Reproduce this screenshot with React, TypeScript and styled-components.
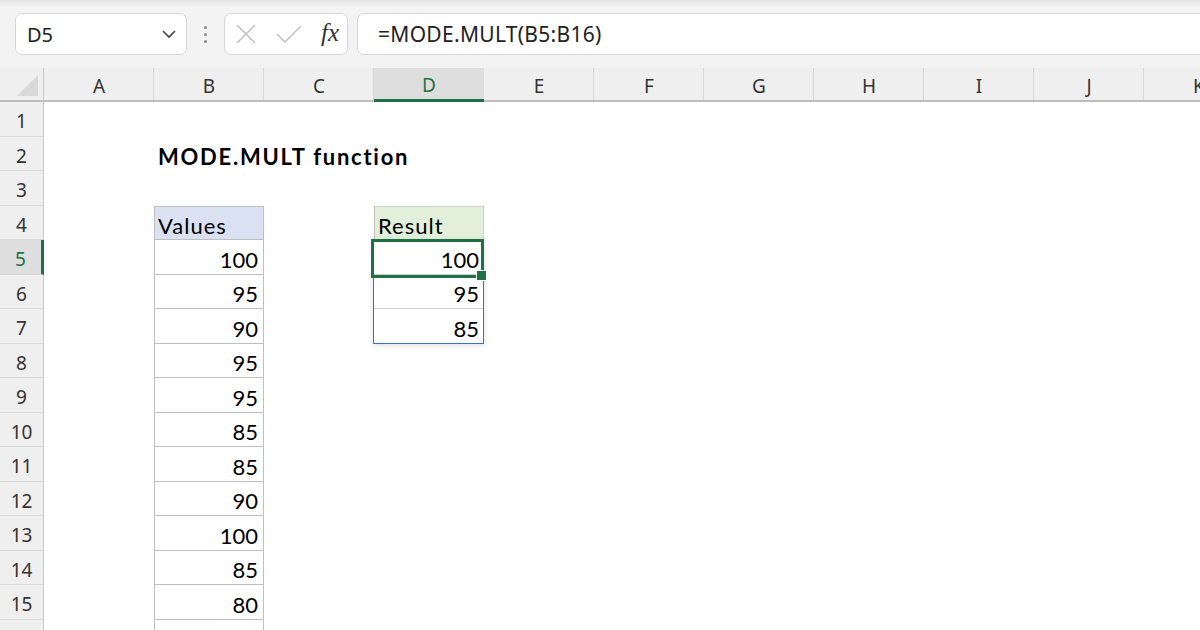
import React from 'react';
import styled, { createGlobalStyle } from 'styled-components';

const COLUMNS = ['A', 'B', 'C', 'D', 'E', 'F', 'G', 'H', 'I', 'J', 'K'];
const ROW_COUNT = 16;
// row 16 lies under the bottom edge, only its top border shows
const VALUES: (number | null)[] = [100, 95, 90, 95, 95, 85, 85, 90, 100, 85, 80, null];
const RESULTS = [100, 95, 85];
const ACTIVE_COL = 'D';
const ACTIVE_ROW = 5;
const LAST_VISIBLE_ROW = 15;

const GREEN = '#1e7145';

const GlobalStyle = createGlobalStyle`
  html, body {
    margin: 0;
    padding: 0;
    background: #ffffff;
    overflow: hidden;
  }
  * {
    box-sizing: border-box;
  }
`;

// grid line numbers: column A is grid column 2, sheet row 1 is grid row 2
const gridCol = (col: string) => COLUMNS.indexOf(col) + 2;
const gridRow = (row: number) => row + 1;

function renderCell(col: string, row: number) {
  const key = `${col}${row}`;
  const at = { $col: gridCol(col), $row: gridRow(row) };

  if (col === 'B' && row === 2) {
    return (
      <Title key={key} {...at}>
        MODE.MULT function
      </Title>
    );
  }
  if (col === 'B' && row === 4) {
    return (
      <HeadCell key={key} {...at} $fill="#d9e1f2" $line="#bfbfbf">
        Values
      </HeadCell>
    );
  }
  if (col === 'B' && row > 4) {
    return (
      <ValueCell key={key} {...at}>
        {VALUES[row - 5]}
      </ValueCell>
    );
  }
  if (col === 'D' && row === 4) {
    return (
      <HeadCell key={key} {...at} $fill="#e2efda" $line="#c9d3c4">
        Result
      </HeadCell>
    );
  }
  if (col === 'D' && row > 4 && row <= 4 + RESULTS.length) {
    return (
      <ResultCell key={key} {...at} $last={row === 4 + RESULTS.length}>
        {RESULTS[row - 5]}
      </ResultCell>
    );
  }
  return <Cell key={key} {...at} />;
}

function App() {
  const rows = Array.from({ length: ROW_COUNT }, (_, i) => i + 1);

  return (
    <Layout>
      <GlobalStyle />
      {/* Formula bar */}
      <Toolbar>
        <NameBox>
          <span>D5</span>
          <svg width="16" height="10" viewBox="0 0 16 10">
            <polyline points="2,2 8,8 14,2" fill="none" stroke="#444" strokeWidth="1.6" />
          </svg>
        </NameBox>
        <Grip>
          <Dot />
          <Dot />
          <Dot />
        </Grip>
        <FuncBox>
          <svg width="22" height="22" viewBox="0 0 22 22">
            <line x1="2" y1="2" x2="20" y2="20" stroke="#bdbdbd" strokeWidth="1.4" />
            <line x1="20" y1="2" x2="2" y2="20" stroke="#bdbdbd" strokeWidth="1.4" />
          </svg>
          <svg width="28" height="22" viewBox="0 0 28 22">
            <polyline points="2,11 10,19 26,3" fill="none" stroke="#bdbdbd" strokeWidth="1.4" />
          </svg>
          <Fx>fx</Fx>
        </FuncBox>
        <FormulaBox>=MODE.MULT(B5:B16)</FormulaBox>
      </Toolbar>

      {/* Sheet */}
      <Sheet>
        <Corner $col={1} $row={1}>
          <svg width="21" height="21" viewBox="0 0 21 21">
            <polygon points="21,0 21,21 0,21" fill="#d9d9d9" />
          </svg>
        </Corner>
        {COLUMNS.map((col) => (
          <ColHeader key={col} $col={gridCol(col)} $row={1} $active={col === ACTIVE_COL}>
            {col}
          </ColHeader>
        ))}
        {rows.map((row) => (
          <React.Fragment key={row}>
            <RowHeader $col={1} $row={gridRow(row)} $active={row === ACTIVE_ROW}>
              {row <= LAST_VISIBLE_ROW ? row : null}
            </RowHeader>
            {COLUMNS.map((col) => renderCell(col, row))}
          </React.Fragment>
        ))}
        <SpillOutline />
        <ActiveOutline />
      </Sheet>
    </Layout>
  );
}

type Slot = { $col: number; $row: number };

const Layout = styled.div`
  display: flex;
  flex-direction: column;
  width: 1200px;
  height: 630px;
  overflow: hidden;
  background: #ffffff;
`;

/* Formula bar */

const Toolbar = styled.div`
  display: flex;
  align-items: flex-start;
  flex-shrink: 0;
  height: 68px;
  padding: 13px 0 0 15px;
  background: linear-gradient(#e4e4e4 0, #f3f3f3 7px, #f3f3f3 100%);
  font-family: 'Noto Sans', 'Open Sans', sans-serif;
`;

const BarBox = styled.div`
  display: flex;
  align-items: center;
  height: 42px;
  background: #ffffff;
  border: 1px solid #d6d6d6;
  border-radius: 7px;
`;

const NameBox = styled(BarBox)`
  justify-content: space-between;
  width: 172px;
  padding: 0 9px 0 11px;
  color: #222;
  font-size: 20px;
`;

const Grip = styled.div`
  display: flex;
  flex-direction: column;
  align-items: center;
  justify-content: center;
  gap: 4px;
  width: 37px;
  height: 42px;
`;

const Dot = styled.span`
  width: 3px;
  height: 3px;
  background: #8a8a8a;
  border-radius: 50%;
`;

const FuncBox = styled(BarBox)`
  justify-content: space-between;
  width: 124px;
  padding: 0 8px 0 10px;
`;

const Fx = styled.span`
  color: #333;
  font-family: 'Liberation Serif', 'DejaVu Serif', serif;
  font-size: 25px;
  font-style: italic;
  line-height: 1;
  padding-bottom: 3px;
`;

const FormulaBox = styled(BarBox)`
  flex: 1;
  margin: 0 -20px 0 9px;
  padding-left: 20px;
  color: #222;
  font-size: 21px;
  letter-spacing: 0.3px;
`;

/* Sheet */

const Sheet = styled.div`
  display: grid;
  grid-template-columns: 44px repeat(11, 110px);
  grid-template-rows: 34px repeat(16, 34.5px);
  background: #ffffff;
`;

const HeaderBase = styled.div<Slot>`
  grid-column: ${({ $col }) => $col};
  grid-row: ${({ $row }) => $row};
  display: flex;
  align-items: center;
  justify-content: center;
  font-family: 'Noto Sans', 'Open Sans', sans-serif;
  font-size: 19px;
  color: #333;
  background-color: #efefef;
`;

const Corner = styled(HeaderBase)`
  align-items: flex-end;
  justify-content: flex-end;
  padding: 0 5px 4px 0;
  border-right: 1px solid #c8c8c8;
  border-bottom: 2px solid #bdbdbd;
`;

const ColHeader = styled(HeaderBase)<{ $active?: boolean }>`
  padding-top: 3px;
  color: ${({ $active }) => ($active ? GREEN : '#333')};
  background: ${({ $active }) =>
    $active
      ? '#dedede'
      : 'linear-gradient(#d6d6d6, #d6d6d6) right top / 1px 100% no-repeat, #efefef'};
  border-bottom: ${({ $active }) => ($active ? `3px solid ${GREEN}` : '2px solid #bdbdbd')};
`;

const RowHeader = styled(HeaderBase)<{ $active?: boolean }>`
  padding-top: 5px;
  color: ${({ $active }) => ($active ? GREEN : '#333')};
  background-color: ${({ $active }) => ($active ? '#dedede' : '#efefef')};
  border-right: ${({ $active }) => ($active ? `3px solid ${GREEN}` : '1px solid #c8c8c8')};
  border-bottom: 1px solid #dadada;
`;

const Cell = styled.div<Slot>`
  grid-column: ${({ $col }) => $col};
  grid-row: ${({ $row }) => $row};
  display: flex;
  align-items: center;
  min-width: 0;
  padding: 5px 5px 0;
  font-family: Lato, 'Liberation Sans', sans-serif;
  font-size: 22px;
  color: #000;
  white-space: nowrap;
`;

const Title = styled(Cell)`
  z-index: 1;
  padding-left: 4px;
  font-weight: 700;
  letter-spacing: 1.75px;
  overflow: visible;
`;

const HeadCell = styled(Cell)<{ $fill: string; $line: string }>`
  padding-left: 3px;
  letter-spacing: 1px;
  background: ${({ $fill }) => $fill};
  border: 1px solid ${({ $line }) => $line};
  border-left-color: #bfbfbf;
`;

const ValueCell = styled(Cell)`
  justify-content: flex-end;
  border: 1px solid #bfbfbf;
  border-top: none;
`;

const ResultCell = styled(Cell)<{ $last?: boolean }>`
  justify-content: flex-end;
  border-bottom: ${({ $last }) => ($last ? 'none' : '1px solid #cfcfcf')};
`;

/* Overlays on the result range */

const SpillOutline = styled.div`
  grid-column: 5;
  grid-row: 6 / 9;
  z-index: 2;
  margin: 0 0 0 -1px;
  border: 1px solid #3b6fd4;
  box-shadow: 0 1px 6px rgba(0, 0, 0, 0.14);
  pointer-events: none;
`;

const ActiveOutline = styled.div`
  position: relative;
  grid-column: 5;
  grid-row: 6;
  z-index: 3;
  margin: -1px 0 -3px -3px;
  border: 3px solid ${GREEN};
  pointer-events: none;

  &::after {
    content: '';
    position: absolute;
    right: -6px;
    bottom: -6px;
    width: 9px;
    height: 9px;
    background: ${GREEN};
    border: 1px solid #ffffff;
  }
`;

export default App;
